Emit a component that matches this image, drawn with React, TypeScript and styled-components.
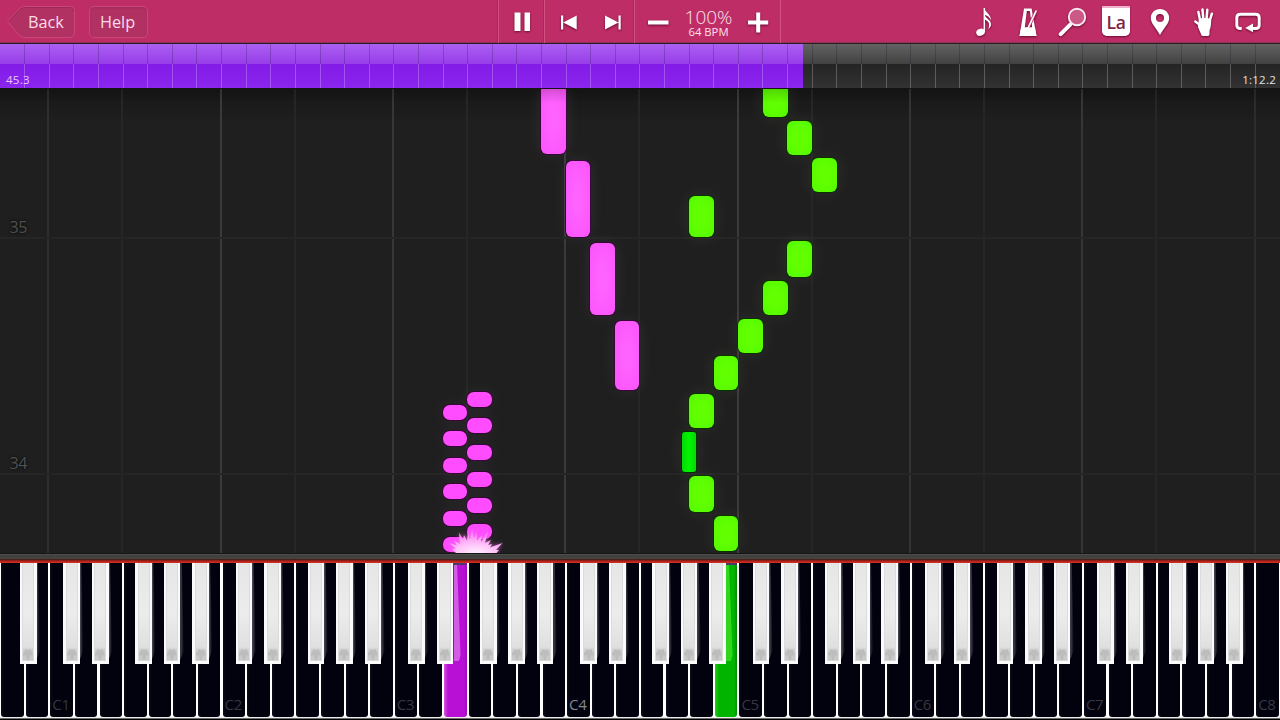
import React from 'react';
import styled, { createGlobalStyle, css } from 'styled-components';

const KEY = 1280 / 52;

const Global = createGlobalStyle`
  *, *::before, *::after { box-sizing: border-box; }
  body { margin: 0; background: #000; overflow: hidden; font-family: "Open Sans", "Noto Sans", sans-serif; }
`;

const Screen = styled.div`
  width: 1280px;
  height: 720px;
  display: flex;
  flex-direction: column;
  overflow: hidden;
  background: #1f1f1f;
`;

const Toolbar = styled.header`
  height: 44px;
  flex: none;
  display: grid;
  grid-template-columns: 498px 284px 1fr;
  background: #bf2d66;
  border-bottom: 1px solid #2c1c22;
  box-shadow: inset 0 -1px #8d3458;
`;

const NavGroup = styled.nav`
  display: flex;
  align-items: flex-start;
  gap: 14px;
  padding: 6px 0 0 7px;
`;

const navText = css`
  border: 0;
  margin: 0;
  padding: 0;
  font: 400 16.3px/32px "Open Sans", sans-serif;
  color: #fbdde9;
`;

const BackButton = styled.button`
  ${navText}
  width: 68px;
  height: 32px;
  display: grid;
  background: none;
  > * { grid-area: 1 / 1; }
  > span { padding-left: 21px; text-align: left; }
`;

const HelpButton = styled.button`
  ${navText}
  width: 59px;
  height: 32px;
  padding: 0 2px 0 0;
  line-height: 30px;
  border: 1px solid #cb477b;
  border-radius: 5px;
  background: #b13163;
  box-shadow: inset 0 1px 2px #9d2a57;
`;

const Transport = styled.div`
  display: flex;
  height: 42px;
`;

const Section = styled.div<{ $w: number; $last?: boolean }>`
  width: ${p => p.$w}px;
  height: 43px;
  display: flex;
  align-items: center;
  border-left: 1px solid #d0527f;
  box-shadow: -1px 0 #a62857;
  ${p => p.$last && css`border-right: 1px solid #d0527f;`}
`;

const Icon = styled.svg`
  display: block;
  flex: none;
  overflow: visible;
  filter: drop-shadow(0 1px 1px rgba(70, 0, 30, 0.75));
`;

const Tempo = styled.div`
  width: 60px;
  display: flex;
  flex-direction: column;
  align-items: center;
  padding-left: 1px;
  color: #fde0eb;
`;

const Percent = styled.span`
  font-size: 19px;
  font-weight: 300;
  line-height: 17px;
  height: 16px;
  margin-top: 4px;
`;

const Bpm = styled.span`
  font-size: 11.3px;
  line-height: 13px;
`;

const Tools = styled.div`
  display: flex;
  justify-content: flex-end;
  padding-right: 10px;
`;

const Tool = styled.span`
  width: 44px;
  height: 43px;
  display: flex;
  align-items: center;
  justify-content: center;
`;

const LabelTool = styled.span`
  width: 28px;
  height: 30px;
  margin-top: -1px;
  border-radius: 1px 1px 5px 5px;
  background: linear-gradient(#f1b3cb 0 2px, #fff 2px);
  box-shadow: 0 1px 2px rgba(70, 0, 30, 0.7);
  color: #7f2347;
  font-size: 17.5px;
  font-weight: 600;
  letter-spacing: -0.3px;
  line-height: 33px;
  text-align: center;
`;

const Timeline = styled.div`
  height: 45px;
  flex: none;
  display: grid;
  > * { grid-area: 1 / 1; }
`;

const TimelineBase = styled.div`
  border-bottom: 1px solid #151515;
  background: linear-gradient(#626262 0, #424242 20px, #242424 20px, #323232 100%);
`;

const Played = styled.div`
  width: 803px;
  height: 44px;
  background: linear-gradient(#ab60f3 0, #973de9 20px, #821be6 20px, #8a26ee 100%);
`;

const Ticks = styled.div`
  display: flex;
  height: 44px;
  padding-left: 0.6px;
  overflow: hidden;
`;

const Tick = styled.i`
  width: ${KEY}px;
  flex: none;
  background: linear-gradient(rgba(10, 0, 30, 0.2) 0 20px, rgba(255, 255, 255, 0.23) 20px) right 0 / 1px 100% no-repeat;
`;

const Times = styled.div`
  display: flex;
  align-items: flex-end;
  justify-content: space-between;
  padding: 0 4px 1px 6px;
  font-size: 11.5px;
  line-height: 16px;
  letter-spacing: 0.25px;
  color: #e2e2e2;
  > :first-child { color: #efc4f4; }
`;

const Roll = styled.main`
  position: relative;
  height: 464px;
  flex: none;
  overflow: hidden;
  background: linear-gradient(#171717, #1f1f1f 34px);
`;

const Guide = styled.i<{ $x: number; $tone: string }>`
  position: absolute;
  top: 0;
  bottom: 0;
  left: ${p => p.$x}px;
  width: 2px;
  background: ${p => p.$tone};
`;

const Measure = styled.div<{ $y: number }>`
  position: absolute;
  left: 0;
  right: 0;
  top: ${p => p.$y}px;
  height: 22px;
  padding-left: 9.5px;
  border-bottom: 2px solid #252525;
  font-size: 16px;
  line-height: 20px;
  letter-spacing: -0.5px;
  color: #505050;
  text-shadow: 0 0 3px #000;
`;

const Note = styled.i<{ $tone: string; $x: number; $y: number; $h: number; $w?: number }>`
  position: absolute;
  left: ${p => p.$x}px;
  top: ${p => p.$y}px;
  width: ${p => p.$w ?? 24.8}px;
  height: ${p => p.$h}px;
  border-radius: ${p => (p.$w ? 3 : p.$h < 18 ? 7 : 6)}px;
  ${p => p.$tone === 'left' && css`background: ${p.$h < 18 ? '#ff4cff' : 'radial-gradient(ellipse, #ff63ff 20%, #fb53fb 100%)'}; box-shadow: 0 0 0 1px #380638, 0 0 18px rgba(255, 200, 255, 0.09);`}
  ${p => p.$tone === 'right' && css`background: radial-gradient(ellipse, #62ff00 30%, #54fa00 100%); box-shadow: 0 0 0 1px #0b3000, 0 0 18px rgba(220, 255, 200, 0.09);`}
  ${p => p.$tone === 'sharp' && css`background: linear-gradient(90deg, #05d805, #02f502 50%, #05d805); box-shadow: 0 0 0 1px #033003, 0 0 18px rgba(220, 255, 200, 0.09);`}
`;

const TopShade = styled.div`
  position: absolute;
  inset: 0 0 auto;
  height: 14px;
  background: linear-gradient(rgba(0, 0, 0, 0.16), transparent);
`;

const Spark = styled.svg`
  position: absolute;
  left: 440px;
  top: 432px;
  filter: drop-shadow(0 0 2px rgba(255, 120, 250, 0.7));
`;

const Rail = styled.div`
  height: 10px;
  flex: none;
  background: linear-gradient(#151515 0 1px, #4d4d4b 1px 2px, #3e3e3d 2px, #444442 6px, #3a2524 6px, #5a1a17 7px, #b8241b 8px 9px, #d32d22 9px);
`;

const Keyboard = styled.footer`
  position: relative;
  height: 157px;
  flex: none;
  display: flex;
  background: linear-gradient(#fff 0 154px, #d8d8d8 155px, #000 156px);
`;

const Key = styled.div`
  width: ${KEY}px;
  flex: none;
  height: 153.500px;
  padding: 0 1px 0 1.1px;
  display: flex;
`;

const KeyFace = styled.div<{ $held?: string }>`
  flex: 1;
  min-width: 0;
  display: flex;
  align-items: flex-end;
  padding: 0 0 1.5px 2px;
  border-radius: 0 0 3px 3px;
  background: ${p => p.$held === 'left'
    ? 'linear-gradient(90deg, #d257df 0, #b710d3 4px, #b80fd4 20px, #a00cba)'
    : p.$held === 'right'
      ? 'linear-gradient(90deg, #2bc51c 0, #00b400 4px, #00b400 19px, #008d00)'
      : 'linear-gradient(90deg, #0c0c18 0, #02020e 3px, #02020e)'};
`;

const KeyLabel = styled.span<{ $bright: boolean }>`
  font-size: 15px;
  line-height: 21px;
  letter-spacing: -0.3px;
  color: ${p => (p.$bright ? '#85858f' : '#363641')};
`;

const ShortKey = styled.div<{ $x: number }>`
  position: absolute;
  top: 0;
  left: ${p => p.$x}px;
  width: 16.6px;
  height: 101px;
  padding: 0 2.3px 3px;
  background: #fafafa;
`;

const ShortFace = styled.div`
  height: 98px;
  display: flex;
  justify-content: center;
  align-items: flex-end;
  border: solid #dcdcdc;
  border-width: 0 1px;
  background: linear-gradient(#e6e6e6 0, #ececec 50px, #e0e0e0 84px, #cfcfcf 87px, #d6d6d6);
`;

const Reflection = styled.i<{ $x: number; $color: string }>`
  position: absolute;
  top: 0;
  left: ${p => p.$x}px;
  width: 7px;
  height: 98px;
  clip-path: polygon(0 0, 50% 0, 100% 94%, 78% 100%, 0 100%);
  background: ${p => p.$color};
`;

const Sheen = styled.i<{ $x: number }>`
  position: absolute;
  top: 0;
  left: ${p => p.$x}px;
  width: 3.6px;
  height: 97px;
  clip-path: polygon(0 0, 45% 0, 100% 90%, 0 100%);
  background: linear-gradient(90deg, #50505e, #1e1e2a 60%, #06060f);
`;

const HeldTop = styled.i<{ $x: number; $w: number }>`
  position: absolute;
  top: 0;
  left: ${p => p.$x}px;
  width: ${p => p.$w}px;
  height: 2px;
  background: #4a3a68;
`;

const leftNotes = [
  [541.5, -8, 74], [566, 72.5, 76], [590.7, 155, 71.5], [615, 233, 69],
  [467.5, 304, 15], [467.5, 330, 15], [467.5, 356.3, 15], [467.5, 383.3, 15], [467.5, 409.3, 15], [467.5, 435.5, 15],
  [443, 317, 15], [443, 343, 15], [443, 369.3, 15], [443, 396.2, 15], [443, 422.4, 15], [443, 448.5, 15],
];
const rightNotes = [
  [763, -8, 37], [787.5, 32.8, 33.5], [812, 70, 34], [689, 108, 41], [787.5, 152.3, 36.5], [763, 192.3, 34.5],
  [738.2, 230.7, 34], [713.7, 268, 34], [689, 306, 34], [689, 388, 36], [713.7, 428, 34.5],
];

const sharpOffsets = [14.1, 42.9, 86.1, 114.6, 143];
const shortKeys = [20, ...Array.from({ length: 7 }, (_, o) => sharpOffsets.map(s => (2 + o * 7) * KEY + s)).flat()];
const guideTones = ['#2e2e2e', '#3a3a3a', '#363636', '#393939', '#3a3a3a', '#343434', '#363636', '#2c2c2c'];
const guides = guideTones.map((tone, o) => [
  { x: (2 + o * 7) * KEY - 1.8, tone },
  { x: (5 + o * 7) * KEY - 1.7, tone: '#262626' },
]).flat();

function PlayerControls() {
  return (
    <Transport>
      <Section $w={46}>
        <Icon width="46" height="42" viewBox="0 0 46 42"><path fill="#fff" d="M15.500 11.500h6v18.500h-6zM25.500 11.500h5.500v18.500h-5.500z" /></Icon>
      </Section>
      <Section $w={90}>
        <Icon width="44" height="42" viewBox="0 0 44 42"><path fill="#fff" d="M16 14.500h2.200v14h-2.200zM31.700 14.500v14l-13.500-7z" /></Icon>
        <Icon width="44" height="42" viewBox="0 0 44 42"><path fill="#fff" d="M29.500 14.500h2.200v14h-2.200zM16 14.500v14l13.500-7z" /></Icon>
      </Section>
      <Section $w={147} $last>
        <Icon width="43" height="42" viewBox="0 0 43 42"><path fill="#fff" d="M13 19.500h20.500v4h-20.500z" /></Icon>
        <Tempo><Percent>100%</Percent><Bpm>64 BPM</Bpm></Tempo>
        <Icon width="42" height="42" viewBox="0 0 42 42"><path fill="#fff" d="M10 19.500H18.200V11.500h4v8h8v4h-8v8h-4v-8H10z" /></Icon>
      </Section>
    </Transport>
  );
}

function ToolIcons() {
  return (
    <Tools>
      <Tool>
        <Icon width="44" height="44" viewBox="0 0 44 44">
          <ellipse cx="18.500" cy="32.200" rx="4.400" ry="3.400" transform="rotate(-20 18.500 32.200)" fill="#fff" />
          <path d="M22.300 32V8" stroke="#fff" strokeWidth="1.500" />
          <path d="M22.300 8c.8 4.600 6.800 6 6.700 12.500-1.200-3.600-4-5.200-6.700-5.800zM22.300 14.500c1.500 4.500 7.700 5.500 6.600 11-.5 1.600-1.400 2.700-2.700 3.500 2.400-5.700-.2-8.200-3.900-9.500z" fill="#fff" />
        </Icon>
      </Tool>
      <Tool>
        <Icon width="44" height="44" viewBox="0 0 44 44">
          <path fillRule="evenodd" d="M18 8.500h7.600L30.500 36h-17zM20.800 11 18.800 27.500h7.400L23.800 11z" fill="#fff" />
          <path d="M22.600 27 29.600 12" stroke="#bf2d66" strokeWidth="3" />
          <path d="M21.800 28.500 30.300 10.500" stroke="#fff" strokeWidth="1.700" />
          <path d="M15.200 27.500H28.900L30.500 36h-17z" fill="#fff" />
        </Icon>
      </Tool>
      <Tool>
        <Icon width="44" height="44" viewBox="0 0 44 44">
          <path d="m10.700 34.200 9.500-9.500" stroke="#fff" strokeWidth="4" strokeLinecap="round" />
          <circle cx="27" cy="17" r="8.200" fill="#cb5886" stroke="#fbeaf1" strokeWidth="1.900" />
        </Icon>
      </Tool>
      <Tool><LabelTool>La</LabelTool></Tool>
      <Tool>
        <Icon width="44" height="44" viewBox="0 0 44 44">
          <path fillRule="evenodd" d="M22 9c5.200 0 9.200 3.900 9.200 8.900C31.200 23.500 26.500 26.500 22 35c-4.500-8.500-9.200-11.500-9.200-17.100C12.800 12.900 16.800 9 22 9zm0 5a4 4 0 1 0 0 8 4 4 0 0 0 0-8z" fill="#fff" />
        </Icon>
      </Tool>
      <Tool>
        <Icon width="44" height="44" viewBox="0 0 44 44">
          <g transform="translate(.5 0)">
            <g fill="none" stroke="#fff" strokeWidth="2.500" strokeLinecap="round" strokeLinejoin="round">
              <path d="m18.300 24-2.400-12M21 22 20 9.500M23.800 22l1-12.300M26.200 24l3.200-10.300M19 31l-2.800-7-3.400-2.500" />
            </g>
            <path d="M16.400 19.500 19.500 18h6l3.200 2c-.1 4-.2 7-1.700 10.500V34c-.3 1.500-1 2-2 2h-4.500c-1.200 0-1.800-.8-2-2l-3-7z" fill="#fff" />
          </g>
        </Icon>
      </Tool>
      <Tool>
        <Icon width="44" height="44" viewBox="0 0 44 44">
          <path d="M15.700 28.500h-1.200c-2.300 0-3.700-1.100-3.700-3.300V17.500c0-2.200 1.400-3.300 3.700-3.300h15c2.300 0 3.700 1.100 3.700 3.300v7.700c0 2.200-1.400 3.300-3.700 3.300H26" fill="none" stroke="#fff" strokeWidth="2.900" />
          <path d="m19.300 28 7.700-4.500v8.800z" fill="#fff" />
        </Icon>
      </Tool>
    </Tools>
  );
}

export default function App() {
  return (
    <>
      <Global />
      <Screen>
        <Toolbar>
          <NavGroup>
            <BackButton>
              <svg width="68" height="32" viewBox="0 0 68 32">
                <path d="M.5 15.500 12 3Q14.500.5 18 .5h44.500q5 0 5 5v21q0 5-5 5H18q-3.500 0-6-2.500z" fill="#b13163" stroke="#cb477b" />
                <path d="M2 15 13 3.500Q15 1.500 18 1.500h44.500q4 0 4 4" fill="none" stroke="#9d2a57" />
              </svg>
              <span>Back</span>
            </BackButton>
            <HelpButton>Help</HelpButton>
          </NavGroup>
          <PlayerControls />
          <ToolIcons />
        </Toolbar>

        <Timeline>
          <TimelineBase />
          <Played />
          <Ticks>{Array.from({ length: 51 }, (_, i) => <Tick key={i} />)}</Ticks>
          <Times><span>45.3</span><span>1:12.2</span></Times>
        </Timeline>

        <Roll>
          {guides.map(g => <Guide key={g.x} $x={g.x} $tone={g.tone} />)}
          <Measure $y={128}>35</Measure>
          <Measure $y={364}>34</Measure>
          {leftNotes.map(([x, y, h]) => <Note key={`${x}-${y}`} $tone="left" $x={x - 0.3} $y={y - 0.8} $h={h} />)}
          {rightNotes.map(([x, y, h]) => <Note key={`${x}-${y}`} $tone="right" $x={x - 0.1} $y={y - 0.8} $h={h} />)}
          <Note $tone="sharp" $x={681.8} $w={14.6} $y={342.7} $h={40.500} />
          <TopShade />
          <Spark width="66" height="32" viewBox="0 0 66 32">
            <defs>
              <radialGradient id="burst" cx=".5" cy="1" r=".8">
                <stop offset="0" stopColor="#fff0ff" />
                <stop offset=".45" stopColor="#ffc4fa" />
                <stop offset="1" stopColor="#fb86f4" />
              </radialGradient>
            </defs>
            <path fill="url(#burst)" d="M16 32 12 28l4-.5L9 22l8 2.500-3-5 6 3.500L19 11.500l4 7L24 14l3 5.500L28 11l2 7L32 8l2 9.500L36.500 11l.5 8L42 14.500 41 21l7-10.500L45 22l6-3-3 5 4-1-2 3.500L62.500 22 56 29l3 0-2.500 3z" />
          </Spark>
        </Roll>
        <Rail />

        <Keyboard>
          {Array.from({ length: 52 }, (_, i) => {
            const octave = (i - 2) / 7 + 1;
            return (
              <Key key={i}>
                <KeyFace $held={i === 18 ? 'left' : i === 29 ? 'right' : undefined}>
                  {Number.isInteger(octave) && <KeyLabel $bright={octave === 4}>C{octave}</KeyLabel>}
                </KeyFace>
              </Key>
            );
          })}
          {shortKeys.map(x => <Sheen key={x} $x={x + 16.4} />)}
          <Reflection $x={453.5} $color="#d35ce4" />
          <Reflection $x={725.500} $color="#2fd61c" />
          <HeldTop $x={453} $w={13} />
          <HeldTop $x={725} $w={12} />
          {shortKeys.map(x => (
            <ShortKey key={x} $x={x}>
              <ShortFace>
                <svg width="10" height="12" viewBox="0 0 10 12">
                  <path d="M0 3.500 2 2V.5h2L5 1.500 6 .5h2V2l1.600 1.500V11H0z" fill="#bdbdbd" />
                  <path d="M0 7 3 6l1 5H0zM9.600 7 7 6l-1 5h3.600z" fill="#c9c9c9" />
                </svg>
              </ShortFace>
            </ShortKey>
          ))}
        </Keyboard>
      </Screen>
    </>
  );
}
